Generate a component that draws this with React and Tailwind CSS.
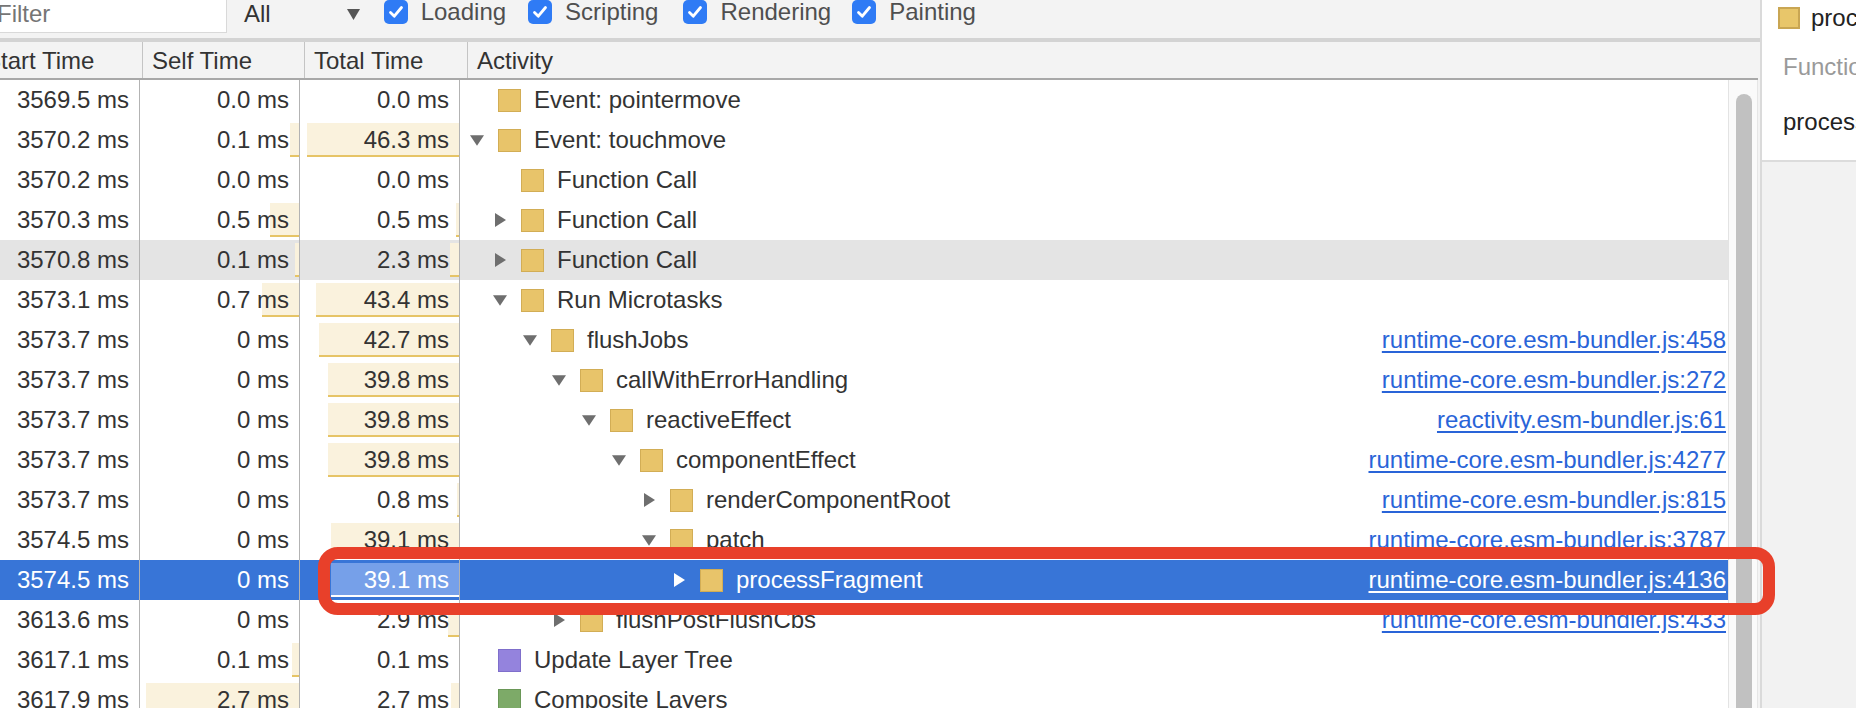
import React from 'react';

const SQ = {
  y: 'bg-[#e8c46a] border-[#d2ad55]',
  p: 'bg-[#9483dd] border-[#7f6fcb]',
  g: 'bg-[#7daa68] border-[#6a9757]',
};

// left padding of the tree item for each depth
const INDENT = ['w-[10px]', 'w-[33px]', 'w-[63px]', 'w-[92px]', 'w-[122px]', 'w-[152px]', 'w-[182px]', 'w-[212px]'];

const ROWS = [
  { s: '3569.5 ms', sf: '0.0 ms', t: '0.0 ms', lv: 0, ar: null, name: 'Event: pointermove', c: 'y', sb: 0, tb: 0 },
  { s: '3570.2 ms', sf: '0.1 ms', t: '46.3 ms', lv: 0, ar: 'd', name: 'Event: touchmove', c: 'y', sb: 9, tb: 152 },
  { s: '3570.2 ms', sf: '0.0 ms', t: '0.0 ms', lv: 1, ar: null, name: 'Function Call', c: 'y', sb: 0, tb: 0 },
  { s: '3570.3 ms', sf: '0.5 ms', t: '0.5 ms', lv: 1, ar: 'r', name: 'Function Call', c: 'y', sb: 29, tb: 3 },
  { s: '3570.8 ms', sf: '0.1 ms', t: '2.3 ms', lv: 1, ar: 'r', name: 'Function Call', c: 'y', sb: 4, tb: 9, hl: 'hover' },
  { s: '3573.1 ms', sf: '0.7 ms', t: '43.4 ms', lv: 1, ar: 'd', name: 'Run Microtasks', c: 'y', sb: 37, tb: 143 },
  { s: '3573.7 ms', sf: '0 ms', t: '42.7 ms', lv: 2, ar: 'd', name: 'flushJobs', c: 'y', link: 'runtime-core.esm-bundler.js:458', sb: 0, tb: 140 },
  { s: '3573.7 ms', sf: '0 ms', t: '39.8 ms', lv: 3, ar: 'd', name: 'callWithErrorHandling', c: 'y', link: 'runtime-core.esm-bundler.js:272', sb: 0, tb: 131 },
  { s: '3573.7 ms', sf: '0 ms', t: '39.8 ms', lv: 4, ar: 'd', name: 'reactiveEffect', c: 'y', link: 'reactivity.esm-bundler.js:61', sb: 0, tb: 131 },
  { s: '3573.7 ms', sf: '0 ms', t: '39.8 ms', lv: 5, ar: 'd', name: 'componentEffect', c: 'y', link: 'runtime-core.esm-bundler.js:4277', sb: 0, tb: 131 },
  { s: '3573.7 ms', sf: '0 ms', t: '0.8 ms', lv: 6, ar: 'r', name: 'renderComponentRoot', c: 'y', link: 'runtime-core.esm-bundler.js:815', sb: 0, tb: 2 },
  { s: '3574.5 ms', sf: '0 ms', t: '39.1 ms', lv: 6, ar: 'd', name: 'patch', c: 'y', link: 'runtime-core.esm-bundler.js:3787', sb: 0, tb: 128 },
  { s: '3574.5 ms', sf: '0 ms', t: '39.1 ms', lv: 7, ar: 'r', name: 'processFragment', c: 'y', link: 'runtime-core.esm-bundler.js:4136', sb: 0, tb: 128, hl: 'sel' },
  { s: '3613.6 ms', sf: '0 ms', t: '2.9 ms', lv: 3, ar: 'r', name: 'flushPostFlushCbs', c: 'y', link: 'runtime-core.esm-bundler.js:433', sb: 0, tb: 11 },
  { s: '3617.1 ms', sf: '0.1 ms', t: '0.1 ms', lv: 0, ar: null, name: 'Update Layer Tree', c: 'p', sb: 7, tb: 0 },
  { s: '3617.9 ms', sf: '2.7 ms', t: '2.7 ms', lv: 0, ar: null, name: 'Composite Layers', c: 'g', sb: 153, tb: 8 },
];

const FILTERS = [
  { label: 'Loading', ml: 'ml-[24px]' },
  { label: 'Scripting', ml: 'ml-[22px]' },
  { label: 'Rendering', ml: 'ml-[25px]' },
  { label: 'Painting', ml: 'ml-[21px]' },
];

function Checkbox() {
  return (
    <div className="w-[24px] h-[24px] rounded-[5px] bg-[#2f7bf5] shrink-0 flex items-center justify-center">
      <svg width="18" height="18" viewBox="0 0 18 18">
        <path d="M3.5 9.5 L7.3 13.2 L14.5 4.5" fill="none" stroke="white" strokeWidth="2.8" strokeLinecap="round" strokeLinejoin="round" />
      </svg>
    </div>
  );
}

function Arrow({ dir, sel }) {
  const fill = sel ? '#ffffff' : '#6e6e6e';
  if (dir === 'd') {
    return (
      <svg width="15" height="11" viewBox="0 0 15 11">
        <polygon points="0,0 15,0 7.5,11" fill={fill} />
      </svg>
    );
  }
  if (dir === 'r') {
    return (
      <svg width="11" height="14" viewBox="0 0 11 14">
        <polygon points="0,0 11,7 0,14" fill={fill} />
      </svg>
    );
  }
  return null;
}

function TimeCell({ w, text, bar, sel, first }) {
  return (
    <div className={`relative shrink-0 h-full ${w} ${first ? '' : 'border-l border-[#b3b3b3]'}`}>
      {bar > 0 && (
        <div
          className={`absolute right-0 top-[3px] h-[34px] border-b-2 ${sel ? 'bg-[#76a0e9] border-white' : 'bg-[#faf2dd] border-[#e6c466]'}`}
          style={{ width: bar }}
        />
      )}
      <div className="relative text-right pr-[10px] leading-[40px] whitespace-nowrap">{text}</div>
    </div>
  );
}

function Row({ r }) {
  const sel = r.hl === 'sel';
  const bg = sel ? 'bg-[#3875d7] text-white' : r.hl === 'hover' ? 'bg-[#e4e4e4] text-[#333]' : 'text-[#333]';
  return (
    <div className={`flex h-[40px] shrink-0 ${bg}`}>
      <TimeCell w="w-[163px]" text={r.s} first />
      <TimeCell w="w-[160px]" text={r.sf} bar={r.sb} sel={sel} />
      <TimeCell w="w-[160px]" text={r.t} bar={r.tb} sel={sel} />
      <div className="flex-1 flex items-center h-full border-l border-[#b3b3b3] min-w-0">
        <div className={`shrink-0 ${INDENT[r.lv]}`} />
        <div className="w-[14px] shrink-0 flex items-center justify-center">
          <Arrow dir={r.ar} sel={sel} />
        </div>
        <div className={`ml-[14px] w-[23px] h-[23px] shrink-0 border ${SQ[r.c]}`} />
        <span className="ml-[13px] whitespace-nowrap leading-[40px]">{r.name}</span>
        {r.link && (
          <span className={`ml-auto pr-[2px] whitespace-nowrap underline underline-offset-[3px] leading-[40px] ${sel ? 'text-white' : 'text-[#2964d8]'}`}>
            {r.link}
          </span>
        )}
      </div>
    </div>
  );
}

export default function App() {
  return (
    <div className="relative flex w-[1856px] h-[708px] overflow-hidden bg-white font-['Liberation_Sans',Arial,sans-serif] text-[24px]">
      {/* Main timeline table */}
      <div className="w-[1760px] shrink-0 flex flex-col overflow-hidden bg-[#f3f3f3]">
        {/* Toolbar */}
        <div className="flex items-start h-[38px] shrink-0 bg-[#f3f3f3]">
          <div className="w-[227px] h-[33px] shrink-0 bg-white border-r border-b border-[#d9d9d9] overflow-hidden">
            <span className="block -ml-[3px] leading-[28px] text-[#757575]">Filter</span>
          </div>
          <span className="ml-[17px] leading-[28px] text-[#333]">All</span>
          <svg className="ml-[76px] mt-[9px] shrink-0" width="13" height="11" viewBox="0 0 13 11">
            <polygon points="0,0 13,0 6.5,11" fill="#555" />
          </svg>
          {FILTERS.map((f) => (
            <div key={f.label} className={`flex items-center ${f.ml}`}>
              <Checkbox />
              <span className="ml-[13px] leading-[24px] text-[#4f4f4f] whitespace-nowrap">{f.label}</span>
            </div>
          ))}
        </div>
        <div className="h-[4px] shrink-0 bg-[#d3d3d3]" />

        {/* Header */}
        <div className="flex w-[1782px] -ml-[24px] h-[38px] shrink-0 bg-[#f3f3f3] border-b-2 border-[#a8a8a8] text-[#333]">
          <div className="w-[166px] shrink-0 pl-[9px] pt-[1px] leading-[36px] whitespace-nowrap">Start Time</div>
          <div className="w-[162px] shrink-0 pl-[9px] pt-[1px] leading-[36px] border-l border-[#c4c4c4] whitespace-nowrap">Self Time</div>
          <div className="w-[163px] shrink-0 pl-[9px] pt-[1px] leading-[36px] border-l border-[#c4c4c4] whitespace-nowrap">Total Time</div>
          <div className="flex-1 pl-[9px] pt-[1px] leading-[36px] border-l border-[#c4c4c4]">Activity</div>
        </div>

        {/* Body */}
        <div className="flex flex-1 min-h-0">
          <div className="w-[1752px] -ml-[24px] shrink-0 flex flex-col bg-white overflow-hidden">
            {ROWS.map((r, i) => (
              <Row key={i} r={r} />
            ))}
          </div>
          <div className="w-[30px] shrink-0 bg-[#fafafa] border-l border-[#e3e3e3] border-r border-r-[#e6e6e6] pt-[14px] pl-[7px]">
            <div className="w-[16px] h-[640px] rounded-full bg-[#c1c1c1]" />
          </div>
        </div>
      </div>

      {/* Details side panel */}
      <div className="flex-1 flex flex-col border-l-2 border-[#dadada] bg-[#f2f2f2] overflow-hidden">
        <div className="h-[162px] shrink-0 bg-white border-b-2 border-[#dcdcdc] flex flex-col">
          <div className="flex items-center pl-[16px] mt-[7px]">
            <div className="w-[22px] h-[22px] shrink-0 bg-[#e8c66a] border-2 border-[#c9a653]" />
            <span className="ml-[11px] whitespace-nowrap text-[#222] leading-[22px]">processFragment</span>
          </div>
          <span className="pl-[21px] mt-[24px] whitespace-nowrap text-[#9a9a9a] leading-[28px]">Function</span>
          <span className="pl-[21px] mt-[27px] whitespace-nowrap text-[#222] leading-[28px]">processFragment</span>
        </div>
      </div>

      {/* Red annotation around the selected row */}
      <div className="absolute left-[318px] top-[547px] w-[1457px] h-[68px] border-[12px] border-[#e8402a] rounded-[20px] pointer-events-none" />
    </div>
  );
}
